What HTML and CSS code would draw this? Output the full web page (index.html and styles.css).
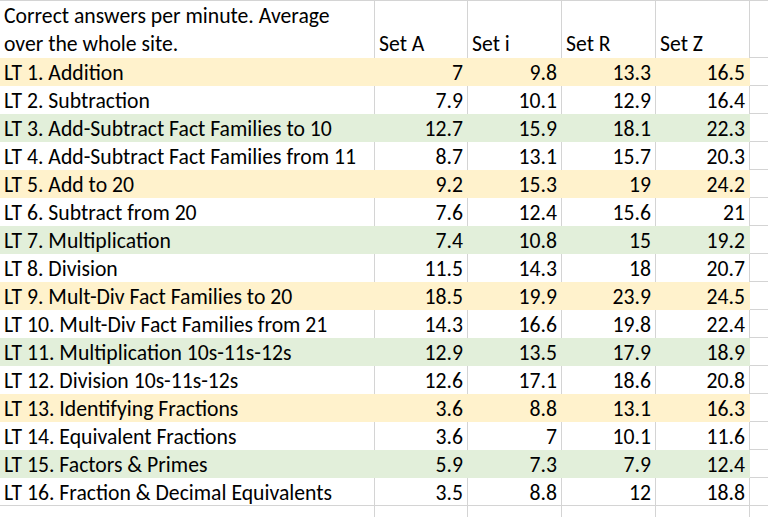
FILE: index.html
```html
<!DOCTYPE html>
<html>
<head>
<meta charset="utf-8">
<link rel="stylesheet" href="styles.css">
</head>
<body>
<div class="sheet">
  <div class="c hdr wrap">Correct answers per minute. Average over the whole site.</div>
  <div class="c hdr">Set A</div>
  <div class="c hdr">Set i</div>
  <div class="c hdr">Set R</div>
  <div class="c hdr">Set Z</div>
  <div class="c hdr x"></div>

  <div class="c y">LT 1. Addition</div><div class="c y n">7</div><div class="c y n">9.8</div><div class="c y n">13.3</div><div class="c y n">16.5</div><div class="c x"></div>
  <div class="c">LT 2. Subtraction</div><div class="c n">7.9</div><div class="c n">10.1</div><div class="c n">12.9</div><div class="c n">16.4</div><div class="c x"></div>
  <div class="c g">LT 3. Add-Subtract Fact Families to 10</div><div class="c g n">12.7</div><div class="c g n">15.9</div><div class="c g n">18.1</div><div class="c g n">22.3</div><div class="c x"></div>
  <div class="c">LT 4. Add-Subtract Fact Families from 11</div><div class="c n">8.7</div><div class="c n">13.1</div><div class="c n">15.7</div><div class="c n">20.3</div><div class="c x"></div>
  <div class="c y">LT 5. Add to 20</div><div class="c y n">9.2</div><div class="c y n">15.3</div><div class="c y n">19</div><div class="c y n">24.2</div><div class="c x"></div>
  <div class="c">LT 6. Subtract from 20</div><div class="c n">7.6</div><div class="c n">12.4</div><div class="c n">15.6</div><div class="c n">21</div><div class="c x"></div>
  <div class="c g">LT 7. Multiplication</div><div class="c g n">7.4</div><div class="c g n">10.8</div><div class="c g n">15</div><div class="c g n">19.2</div><div class="c x"></div>
  <div class="c">LT 8. Division</div><div class="c n">11.5</div><div class="c n">14.3</div><div class="c n">18</div><div class="c n">20.7</div><div class="c x"></div>
  <div class="c y">LT 9. Mult-Div Fact Families to 20</div><div class="c y n">18.5</div><div class="c y n">19.9</div><div class="c y n">23.9</div><div class="c y n">24.5</div><div class="c x"></div>
  <div class="c">LT 10. Mult-Div Fact Families from 21</div><div class="c n">14.3</div><div class="c n">16.6</div><div class="c n">19.8</div><div class="c n">22.4</div><div class="c x"></div>
  <div class="c g">LT 11. Multiplication 10s-11s-12s</div><div class="c g n">12.9</div><div class="c g n">13.5</div><div class="c g n">17.9</div><div class="c g n">18.9</div><div class="c x"></div>
  <div class="c">LT 12. Division 10s-11s-12s</div><div class="c n">12.6</div><div class="c n">17.1</div><div class="c n">18.6</div><div class="c n">20.8</div><div class="c x"></div>
  <div class="c y">LT 13. Identifying Fractions</div><div class="c y n">3.6</div><div class="c y n">8.8</div><div class="c y n">13.1</div><div class="c y n">16.3</div><div class="c x"></div>
  <div class="c">LT 14. Equivalent Fractions</div><div class="c n">3.6</div><div class="c n">7</div><div class="c n">10.1</div><div class="c n">11.6</div><div class="c x"></div>
  <div class="c g">LT 15. Factors &amp; Primes</div><div class="c g n">5.9</div><div class="c g n">7.3</div><div class="c g n">7.9</div><div class="c g n">12.4</div><div class="c x"></div>
  <div class="c last">LT 16. Fraction &amp; Decimal Equivalents</div><div class="c n last">3.5</div><div class="c n last">8.8</div><div class="c n last">12</div><div class="c n last">18.8</div><div class="c x"></div>

  <div class="c"></div><div class="c"></div><div class="c"></div><div class="c"></div><div class="c"></div><div class="c x"></div>
</div>
</body>
</html>
```

FILE: styles.css
```css
html, body {
  margin: 0;
  padding: 0;
  background: #ffffff;
}

body {
  font-family: Carlito, Calibri, "Open Sans", sans-serif;
  font-size: 21.7px;
  color: #000000;
  overflow: hidden;
}

.sheet {
  display: grid;
  grid-template-columns: 375px 93px 94px 94px 94px 1fr;
  grid-template-rows: 57px;
  grid-auto-rows: 28px;
  border-top: 1px solid #d4d4d4;
  width: 768px;
}

.c {
  box-sizing: border-box;
  border-right: 1px solid #d4d4d4;
  padding: 2px 4px 0;
  line-height: 26px;
  white-space: nowrap;
  overflow: hidden;
}

.hdr {
  display: flex;
  align-items: flex-end;
  line-height: 28px;
  padding-top: 0;
  padding-bottom: 0;
}

.wrap {
  white-space: normal;
}

.n {
  text-align: right;
}

.y {
  background: #fff2cc;
  border-right-color: #fff2cc;
}

.g {
  background: #e2efda;
  border-right-color: #e2efda;
}

.last {
  border-bottom: 1px solid #d4d4d4;
}

.x {
  border-right: none;
  border-bottom: 1px solid #d4d4d4;
}
```
